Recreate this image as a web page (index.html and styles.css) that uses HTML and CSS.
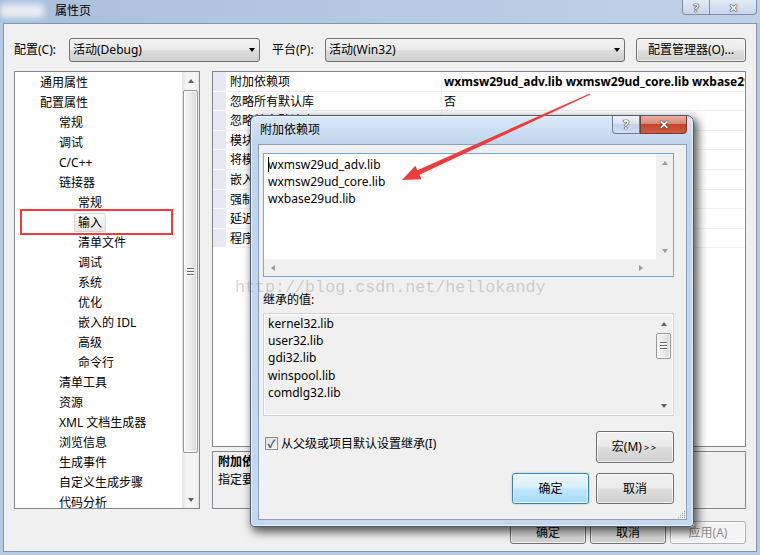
FILE: index.html
```html
<!DOCTYPE html>
<html lang="zh-CN">
<head>
    <meta charset="UTF-8">
    <title>属性页</title>
    <link rel="stylesheet" href="styles.css">
</head>
<body>
<div class="window">
    <div class="titlebar">
        <span class="app-icon"></span>
        <span class="title">属性页</span>
        <div class="caption">
            <span class="cap-btn cap-help">?</span>
            <span class="cap-btn cap-close">✕</span>
        </div>
    </div>

    <div class="client">
        <div class="toolbar">
            <span class="lbl lbl-config">配置(C):</span>
            <div class="combo combo-config"><span>活动(Debug)</span><i class="caret"></i></div>
            <span class="lbl lbl-platform">平台(P):</span>
            <div class="combo combo-platform"><span>活动(Win32)</span><i class="caret"></i></div>
            <button class="btn btn-mgr">配置管理器(O)...</button>
        </div>

        <div class="main">
            <div class="tree">
                <div class="nodes">
                    <div class="node l1">通用属性</div>
                    <div class="node l1">配置属性</div>
                    <div class="node l2">常规</div>
                    <div class="node l2">调试</div>
                    <div class="node l2">C/C++</div>
                    <div class="node l2">链接器</div>
                    <div class="node l3">常规</div>
                    <div class="node l3"><span class="sel">输入</span></div>
                    <div class="node l3">清单文件</div>
                    <div class="node l3">调试</div>
                    <div class="node l3">系统</div>
                    <div class="node l3">优化</div>
                    <div class="node l3">嵌入的 IDL</div>
                    <div class="node l3">高级</div>
                    <div class="node l3">命令行</div>
                    <div class="node l2">清单工具</div>
                    <div class="node l2">资源</div>
                    <div class="node l2">XML 文档生成器</div>
                    <div class="node l2">浏览信息</div>
                    <div class="node l2">生成事件</div>
                    <div class="node l2">自定义生成步骤</div>
                    <div class="node l2">代码分析</div>
                </div>
                <div class="vbar">
                    <div class="sb-btn"><i class="tri up"></i></div>
                    <div class="sb-thumb tree-thumb"><i class="grip"></i></div>
                    <div class="sb-track"></div>
                    <div class="sb-btn"><i class="tri down"></i></div>
                </div>
            </div>

            <div class="right">
                <div class="grid">
                    <div class="row"><span class="strip"></span><span class="name">附加依赖项</span><span class="value bold">wxmsw29ud_adv.lib wxmsw29ud_core.lib wxbase29ud.lib;%(AdditionalDependencies)</span></div>
                    <div class="row"><span class="strip"></span><span class="name">忽略所有默认库</span><span class="value">否</span></div>
                    <div class="row"><span class="strip"></span><span class="name">忽略特定默认库</span><span class="value"></span></div>
                    <div class="row"><span class="strip"></span><span class="name">模块定义文件</span><span class="value"></span></div>
                    <div class="row"><span class="strip"></span><span class="name">将模块添加到程序集</span><span class="value"></span></div>
                    <div class="row"><span class="strip"></span><span class="name">嵌入托管资源文件</span><span class="value"></span></div>
                    <div class="row"><span class="strip"></span><span class="name">强制符号引用</span><span class="value"></span></div>
                    <div class="row"><span class="strip"></span><span class="name">延迟加载的 DLL</span><span class="value"></span></div>
                    <div class="row"><span class="strip"></span><span class="name">程序集链接资源</span><span class="value"></span></div>
                </div>
                <div class="desc">
                    <b>附加依赖项</b>
                    <div>指定要添加到链接命令行的附加项 [例如 kernel32.lib]</div>
                </div>
            </div>
        </div>

        <div class="footer">
            <button class="btn">确定</button>
            <button class="btn">取消</button>
            <button class="btn" disabled>应用(A)</button>
        </div>
    </div>

    <!-- 标注框 -->
    <div class="mark-box"></div>

    <!-- 附加依赖项 对话框 -->
    <div class="dialog">
        <div class="dlg-title">附加依赖项</div>
        <div class="dlg-caption">
            <span class="dcap dcap-help">?</span>
            <span class="dcap dcap-close">✕</span>
        </div>
        <div class="dlg-client">
            <div class="edit">
                <div class="edit-text">
                    <div class="first">wxmsw29ud_adv.lib</div>
                    <div>wxmsw29ud_core.lib</div>
                    <div>wxbase29ud.lib</div>
                </div>
                <div class="vbar flat">
                    <div class="sb-btn"><i class="tri up light"></i></div>
                    <div class="sb-track"></div>
                    <div class="sb-btn"><i class="tri down light"></i></div>
                </div>
                <div class="hbar">
                    <div class="sb-btn"><i class="tri left light"></i></div>
                    <div class="sb-track"></div>
                    <div class="sb-btn"><i class="tri right light"></i></div>
                </div>
                <div class="corner"></div>
            </div>

            <div class="lbl-inherit">继承的值:</div>
            <div class="list">
                <div class="list-text">
                    <div>kernel32.lib</div>
                    <div>user32.lib</div>
                    <div>gdi32.lib</div>
                    <div>winspool.lib</div>
                    <div>comdlg32.lib</div>
                </div>
                <div class="vbar flat">
                    <div class="sb-btn"><i class="tri up"></i></div>
                    <div class="sb-thumb list-thumb"><i class="grip"></i></div>
                    <div class="sb-track"></div>
                    <div class="sb-btn"><i class="tri down"></i></div>
                </div>
            </div>

            <div class="dlg-row1">
                <label class="check-line"><span class="check">✓</span>从父级或项目默认设置继承(I)</label>
                <button class="btn btn-macro">宏(M)<small>&gt;&gt;</small></button>
            </div>
            <div class="dlg-row2">
                <button class="btn btn-default">确定</button>
                <button class="btn btn-dlg">取消</button>
            </div>
            <svg class="size-grip" width="10" height="10" viewBox="0 0 10 10">
                <g fill="#a0a0a0">
                    <rect x="8" y="2" width="1" height="1"/>
                    <rect x="6" y="4" width="1" height="1"/><rect x="8" y="4" width="1" height="1"/>
                    <rect x="4" y="6" width="1" height="1"/><rect x="6" y="6" width="1" height="1"/><rect x="8" y="6" width="1" height="1"/>
                    <rect x="2" y="8" width="1" height="1"/><rect x="4" y="8" width="1" height="1"/><rect x="6" y="8" width="1" height="1"/><rect x="8" y="8" width="1" height="1"/>
                </g>
            </svg>
        </div>
    </div>

    <svg class="arrow" width="760" height="555" viewBox="0 0 760 555">
        <polygon fill="#ef3b3b" points="590.3,94.6 419.4,174.8 421.5,179.3 402,180 415.3,165.7 417.4,170.2 589.7,93.4"/>
    </svg>

    <div class="watermark">http://blog.csdn.net/hellokandy</div>
</div>
</body>
</html>
```

FILE: styles.css
```css
* {
    box-sizing: border-box;
}
body {
    margin: 0;
    font: 12px/1 "Noto Sans", "Noto Sans CJK SC", sans-serif;
    color: #000;
}
.window {
    position: relative;
    width: 760px;
    height: 555px;
    overflow: hidden;
    background: #b6cae2;
    display: flex;
    flex-direction: column;
}

/* 标题栏 */
.titlebar {
    height: 23px;
    display: flex;
    align-items: center;
    position: relative;
    background: linear-gradient(to right, #a9c0dc, #bfd2e8);
}
.app-icon {
    width: 44px;
    height: 14px;
    margin: 0 11px 2px 0;
    background: #e8edf3;
    border-radius: 4px;
    filter: blur(3px);
}
.title {
    margin-bottom: 2px;
}
.caption {
    position: absolute;
    top: 0;
    right: 3px;
    display: flex;
}
.cap-btn {
    height: 15px;
    border: 1px solid #7d8fa8;
    border-top: none;
    background: linear-gradient(rgba(255,255,255,.55), rgba(255,255,255,.15));
    color: #f6f6f6;
    text-shadow: 0 0 1px #222, 0 0 1px #222, 0 0 1px #222;
    font-size: 11px;
    font-weight: bold;
    display: flex;
    align-items: center;
    justify-content: center;
}
.cap-help {
    width: 28px;
    border-radius: 0 0 0 4px;
}
.cap-close {
    width: 47px;
    border-left: none;
    border-radius: 0 0 4px 0;
}

/* 主窗口客户区 */
.client {
    flex: 1;
    margin: 0 3px 3px;
    background: #f0f0f0;
    border: 1px solid #8396b0;
    padding: 14px 10px 0 10px;
}
.toolbar {
    display: flex;
    align-items: center;
    height: 24px;
}
.lbl-config {
    width: 55px;
}
.lbl-platform {
    margin-left: 12px;
    width: 53px;
}
.combo {
    height: 24px;
    border: 1px solid #707070;
    border-radius: 3px;
    background: linear-gradient(#f2f2f2, #ebebeb 48%, #dddddd 52%, #cfcfcf);
    display: flex;
    align-items: center;
    justify-content: space-between;
    padding: 0 4px 0 3px;
}
.combo-config {
    width: 191px;
}
.combo-platform {
    width: 300px;
}
.caret {
    border-left: 3.5px solid transparent;
    border-right: 3.5px solid transparent;
    border-top: 4px solid #000;
}
.btn {
    font: inherit;
    color: #000;
    height: 23px;
    padding: 0;
    border: 1px solid #707070;
    border-radius: 3px;
    background: linear-gradient(#f2f2f2, #ebebeb 46%, #dddddd 54%, #cfcfcf);
    box-shadow: inset 0 0 0 1px rgba(255,255,255,.7);
}
.btn-mgr {
    margin-left: 11px;
    width: 110px;
    height: 24px;
}

.main {
    display: flex;
    gap: 12px;
    margin-top: 9px;
    height: 438px;
}

/* 左侧树 */
.tree {
    width: 186px;
    border: 1px solid #828790;
    background: #fff;
    display: flex;
}
.nodes {
    flex: 1;
    overflow: hidden;
    padding-top: 1px;
}
.node {
    height: 20px;
    line-height: 20px;
    white-space: nowrap;
}
.l1 { padding-left: 25px; }
.l2 { padding-left: 44px; }
.l3 { padding-left: 63px; }
.sel {
    display: inline-block;
    height: 19px;
    line-height: 17px;
    padding: 0 3px;
    margin-left: -4px;
    border: 1px solid #d6d6d6;
    border-radius: 2px;
    background: linear-gradient(#fafafa, #e6e6e6);
}

/* 滚动条 */
.vbar {
    width: 17px;
    display: flex;
    flex-direction: column;
    background: linear-gradient(to right, #e4e4e4, #f4f4f4 25%, #f4f4f4 75%, #eaeaea);
}
.vbar.flat {
    background: #f0f0f0;
}
.hbar {
    height: 17px;
    display: flex;
    background: #f0f0f0;
}
.sb-btn {
    width: 17px;
    height: 17px;
    display: flex;
    align-items: center;
    justify-content: center;
}
.sb-track {
    flex: 1;
}
.tri {
    width: 0;
    height: 0;
}
.tri.up {
    border-left: 3.5px solid transparent;
    border-right: 3.5px solid transparent;
    border-bottom: 4px solid #606060;
}
.tri.down {
    border-left: 3.5px solid transparent;
    border-right: 3.5px solid transparent;
    border-top: 4px solid #606060;
}
.tri.left {
    border-top: 3.5px solid transparent;
    border-bottom: 3.5px solid transparent;
    border-right: 4px solid #9a9a9a;
}
.tri.right {
    border-top: 3.5px solid transparent;
    border-bottom: 3.5px solid transparent;
    border-left: 4px solid #9a9a9a;
}
.tri.up.light { border-bottom-color: #9a9a9a; }
.tri.down.light { border-top-color: #9a9a9a; }
.sb-thumb {
    margin: 1px 1px 0;
    border: 1px solid #979797;
    border-radius: 2px;
    background: linear-gradient(to right, #f5f5f5, #ebebeb 50%, #d9d9d9);
    box-shadow: inset 0 0 0 1px rgba(255,255,255,.7);
    display: flex;
    align-items: center;
    justify-content: center;
}
.tree-thumb {
    height: 363px;
}
.list-thumb {
    height: 26px;
}
.grip {
    width: 7px;
    height: 8px;
    background: repeating-linear-gradient(to bottom, #6a6a6a 0 1px, #ffffff 1px 2px, transparent 2px 3px);
}

/* 右侧属性网格 */
.right {
    flex: 1;
    display: flex;
    flex-direction: column;
    gap: 4px;
}
.grid {
    height: 376px;
    border: 1px solid #828790;
    background: #fff;
}
.row {
    display: grid;
    grid-template-columns: 13px 216px 1fr;
    height: 19.6px;
    line-height: 19px;
}
.strip {
    background: #e6e9f4;
    border-bottom: 1px solid #fff;
}
.name {
    padding-left: 4px;
    border-bottom: 1px solid #eef0f5;
    border-right: 1px solid #eef0f5;
    white-space: nowrap;
    overflow: hidden;
}
.value {
    padding-left: 2px;
    border-bottom: 1px solid #eef0f5;
    white-space: nowrap;
    overflow: hidden;
}
.bold {
    font-weight: bold;
}
.desc {
    flex: 1;
    border: 1px solid #828790;
    padding: 1px 5px;
    line-height: 18px;
    white-space: nowrap;
    overflow: hidden;
}
.desc b {
    display: block;
}

.footer {
    display: flex;
    justify-content: flex-end;
    gap: 4px;
    margin-top: 12px;
}
.footer .btn {
    width: 76px;
}
.btn:disabled {
    color: #8d8d8d;
    border-color: #adb2b5;
    background: #f4f4f4;
}

.mark-box {
    position: absolute;
    left: 20px;
    top: 209px;
    width: 153px;
    height: 26px;
    border: 2px solid #f23b3b;
}

/* 对话框 */
.dialog {
    position: absolute;
    left: 250px;
    top: 115px;
    width: 444px;
    height: 412px;
    border: 1px solid #4f5d70;
    border-radius: 7px 7px 4px 4px;
    background: linear-gradient(#d9e8f7, #c0d6ee 28px, #c4d9f0);
    box-shadow: 3px 4px 10px 1px rgba(0,0,0,.65), inset 0 0 0 1px rgba(255,255,255,.6);
    padding: 0 6px 6px 7px;
    display: flex;
    flex-direction: column;
}
.dlg-title {
    height: 28px;
    line-height: 28px;
    padding-left: 2px;
}
.dlg-caption {
    position: absolute;
    top: 0;
    right: 6px;
    display: flex;
}
.dcap {
    height: 18px;
    border: 1px solid #6b7c93;
    border-top: none;
    display: flex;
    align-items: center;
    justify-content: center;
    font-weight: bold;
    color: #fff;
    text-shadow: 0 0 1px #222, 0 0 1px #222, 0 0 1px #222;
}
.dcap-help {
    width: 28px;
    border-radius: 0 0 0 4px;
    background: linear-gradient(#eef4fb, #d3e1f1 50%, #c2d4ea 50%, #cfdef0);
    font-size: 12px;
}
.dcap-close {
    width: 47px;
    border-left-color: #7a3b2e;
    border-right-color: #7a3b2e;
    border-bottom-color: #7a3b2e;
    border-radius: 0 0 4px 0;
    background: linear-gradient(#e9b0a3, #d98a77 45%, #c4452c 50%, #d25a3f);
    font-size: 12px;
}
.dlg-client {
    position: relative;
    flex: 1;
    background: #f0f0f0;
    border: 1px solid #8ba0bd;
    padding: 8px 12px 0 4px;
}
.edit {
    height: 124px;
    border: 1px solid #6fa7de;
    background: #fff;
    display: grid;
    grid-template-columns: 1fr 17px;
    grid-template-rows: 1fr 17px;
}
.edit-text {
    padding: 2px 4px;
    line-height: 17px;
    white-space: nowrap;
}
.first::before {
    content: "";
    display: inline-block;
    width: 1px;
    height: 15px;
    background: #000;
    vertical-align: -3px;
    margin-right: -1px;
}
.corner {
    background: #f0f0f0;
}
.lbl-inherit {
    margin-top: 14px;
    margin-bottom: 5px;
    line-height: 17px;
}
.list {
    height: 103px;
    border: 1px solid #d2d2d2;
    background: #f0f0f0;
    box-shadow: inset 0 0 0 1px #fff;
    display: flex;
    overflow: hidden;
}
.list-text {
    flex: 1;
    padding: 1px 4px;
    line-height: 17.2px;
    overflow: hidden;
}
.list .vbar {
    margin: 1px 1px 1px 0;
}
.dlg-row1 {
    display: flex;
    justify-content: space-between;
    align-items: flex-start;
    margin-top: 15px;
}
.check-line {
    display: flex;
    align-items: center;
    margin-top: 6px;
    margin-left: 2px;
    line-height: 13px;
}
.check {
    width: 13px;
    height: 13px;
    margin-right: 3px;
    border: 1px solid #8e8f8f;
    background: linear-gradient(135deg, #dcdcdc, #fbfbfb);
    color: #3b4f8c;
    font-size: 11px;
    font-weight: bold;
    line-height: 11px;
    text-align: center;
}
.btn-macro {
    width: 78px;
    height: 32px;
}
.btn-macro small {
    font-size: 9px;
    letter-spacing: 2px;
    margin-left: 2px;
}
.dlg-row2 {
    display: flex;
    justify-content: flex-end;
    gap: 7px;
    margin-top: 10px;
}
.btn-default {
    width: 77px;
    height: 31px;
    border-color: #3c7fb1;
    background: linear-gradient(#eaf6fd, #d9f0fc 46%, #bee6fd 54%, #a7d9f5);
    box-shadow: inset 0 0 0 1px rgba(255,255,255,.8), 0 0 2px #6cc0f0;
}
.btn-dlg {
    width: 78px;
    height: 31px;
}
.size-grip {
    position: absolute;
    right: 0;
    bottom: 0;
}

/* 批注 */
.arrow {
    position: absolute;
    left: 0;
    top: 0;
    pointer-events: none;
}
.watermark {
    position: absolute;
    left: 235px;
    top: 279px;
    font: 16.7px/18px "Liberation Mono", monospace;
    color: rgba(120, 120, 120, .32);
    white-space: nowrap;
    pointer-events: none;
}
```
